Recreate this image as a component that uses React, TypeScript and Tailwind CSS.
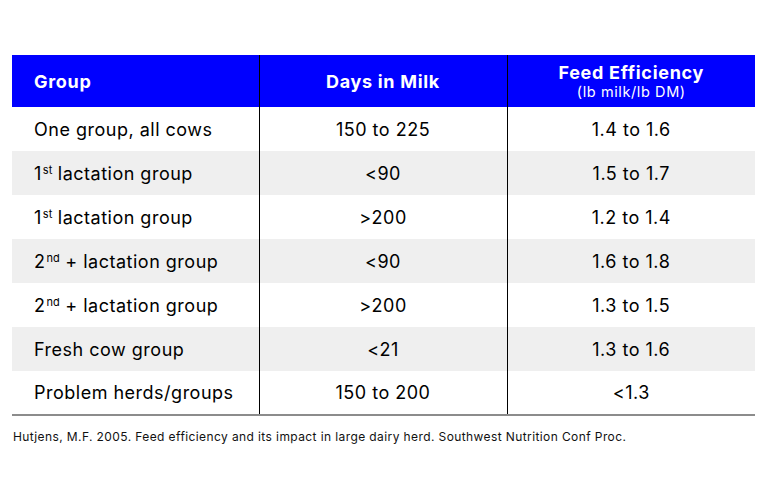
const Sup = ({ children }: { children: string }) => (
  <sup className="text-[11px] align-baseline relative -top-[6px] tracking-normal ml-[1px]">{children}</sup>
);

const rows: { group: React.ReactNode; days: string; eff: string }[] = [
  { group: "One group, all cows", days: "150 to 225", eff: "1.4 to 1.6" },
  { group: <>1<Sup>st</Sup> lactation group</>, days: "<90", eff: "1.5 to 1.7" },
  { group: <>1<Sup>st</Sup> lactation group</>, days: ">200", eff: "1.2 to 1.4" },
  { group: <>2<Sup>nd</Sup> + lactation group</>, days: "<90", eff: "1.6 to 1.8" },
  { group: <>2<Sup>nd</Sup> + lactation group</>, days: ">200", eff: "1.3 to 1.5" },
  { group: "Fresh cow group", days: "<21", eff: "1.3 to 1.6" },
  { group: "Problem herds/groups", days: "150 to 200", eff: "<1.3" },
];

export default function App() {
  return (
    <div className="w-[768px] h-[499px] bg-white pt-[55px] pl-[12px] font-['Inter','Liberation_Sans',sans-serif] text-black">
      <table className="w-[743px] border-collapse table-fixed">
        <thead>
          <tr className="bg-[#0000ff] text-white h-[52px]">
            <th className="w-[247px] text-left pl-[22px] text-[18px] font-bold tracking-[0.7px]">Group</th>
            <th className="w-[248px] border-l border-black text-center text-[18px] font-bold tracking-[0.7px]">Days in Milk</th>
            <th className="w-[248px] border-l border-black text-center font-bold leading-none">
              <div className="text-[18px] tracking-[0.7px] pt-[2px]">Feed Efficiency</div>
              <div className="text-[14.5px] font-normal tracking-[0.6px] mt-[3px]">(lb milk/lb DM)</div>
            </th>
          </tr>
        </thead>
        <tbody className="text-[18px] tracking-[0.5px]">
          {rows.map((r, i) => (
            <tr key={i} className={`h-[44px] ${i % 2 === 1 ? "bg-[#efefef]" : "bg-white"} ${i === rows.length - 1 ? "border-b-2 border-[#8c8c8c]" : ""}`}>
              <td className="pl-[22px]">{r.group}</td>
              <td className="border-l border-black text-center">{r.days}</td>
              <td className="border-l border-black text-center">{r.eff}</td>
            </tr>
          ))}
        </tbody>
      </table>
      <p className="text-[12px] tracking-[0.4px] mt-[12px] pl-[1px] text-[#111]">
        Hutjens, M.F. 2005. Feed efficiency and its impact in large dairy herd. Southwest Nutrition Conf Proc.
      </p>
    </div>
  );
}
